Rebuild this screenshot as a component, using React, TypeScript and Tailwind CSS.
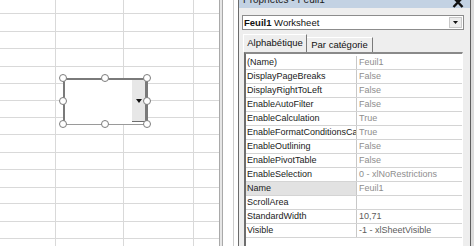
import React from "react";

const sheetRows = [
  "h-[14px]", "h-[18px]", "h-[17px]", "h-[18px]", "h-[17px]", "h-[17px]", "h-[17px]",
  "h-[17px]", "h-[18px]", "h-[17px]", "h-[18px]", "h-[16px]", "h-[18px]", "h-[17px]", "h-[8px]",
];

const props: { name: string; value: string; dark?: boolean; selected?: boolean }[] = [
  { name: "(Name)", value: "Feuil1" },
  { name: "DisplayPageBreaks", value: "False" },
  { name: "DisplayRightToLeft", value: "False" },
  { name: "EnableAutoFilter", value: "False" },
  { name: "EnableCalculation", value: "True" },
  { name: "EnableFormatConditionsCalculation", value: "True" },
  { name: "EnableOutlining", value: "False" },
  { name: "EnablePivotTable", value: "False" },
  { name: "EnableSelection", value: "0 - xlNoRestrictions" },
  { name: "Name", value: "Feuil1", selected: true },
  { name: "ScrollArea", value: "" },
  { name: "StandardWidth", value: "10,71", dark: true },
  { name: "Visible", value: "-1 - xlSheetVisible", dark: true },
];

function Handle({ pos }: { pos: string }) {
  return <span className={`absolute w-[8px] h-[8px] -ml-[4px] -mt-[4px] rounded-full border border-[#7d7d7d] bg-white ${pos}`} />;
}

function Sheet() {
  return (
    <div className="relative w-[219px] h-full overflow-hidden bg-white">
      {sheetRows.map((h, i) => (
        <div key={i} className={`flex border-b border-[#d9d9d9] ${h}`}>
          <div className="w-[56px] border-r border-[#d9d9d9]" />
          <div className="w-[68px] border-r border-[#d9d9d9]" />
          <div className="w-[70px] border-r border-[#d9d9d9]" />
          <div className="flex-1" />
        </div>
      ))}

      {/* combo box control in design mode */}
      <div className="absolute left-[63px] top-[78px] w-[85px] h-[47px]">
        <div className="flex h-full border-t-2 border-l-2 border-b border-t-[#7a7a7a] border-l-[#7a7a7a] border-b-[#9a9a9a] bg-white">
          <div className="flex-1" />
          <div className="flex w-[13px] h-[42px] items-center justify-center bg-[#e7e7e7] border-b border-[#6e6e6e]">
            <svg width="6" height="4" viewBox="0 0 6 4"><path d="M0 0h6L3 4z" fill="#111" /></svg>
          </div>
          <div className="w-[3px] bg-[#7a7a7a]" />
        </div>
        <Handle pos="left-[0px] top-[0px]" />
        <Handle pos="left-[42px] top-[0px]" />
        <Handle pos="left-[84px] top-[0px]" />
        <Handle pos="left-[0px] top-[23px]" />
        <Handle pos="left-[84px] top-[23px]" />
        <Handle pos="left-[0px] top-[46px]" />
        <Handle pos="left-[42px] top-[46px]" />
        <Handle pos="left-[84px] top-[46px]" />
      </div>
    </div>
  );
}

function Splitter() {
  return (
    <div className="flex w-[19px] h-full">
      <div className="w-[1px] bg-[#a9a9a9]" />
      <div className="w-[2px] bg-[#e6e6e6]" />
      <div className="w-[1px] bg-[#a9a9a9]" />
      <div className="w-[10px] bg-white" />
      <div className="w-[1px] bg-[#cdcdcd]" />
      <div className="w-[4px] bg-white" />
    </div>
  );
}

function PropertiesPanel() {
  return (
    <div className="flex h-full">
      <div className="flex flex-col w-[232px] h-full border-l border-[#6b6b6b] bg-[#eeeeee]">
        {/* title bar, cut at the top */}
        <div className="flex h-[8px] overflow-hidden bg-[#c3d2e3] pl-[4px] pr-[6px] justify-between">
          <span className="-mt-[6px] text-[10px] leading-[12px] text-[#1c1c1c]">Propriétés - Feuil1</span>
          <svg width="12" height="11" viewBox="0 0 12 11" className="-mt-[3px]">
            <path d="M1.5 0.5L10.5 10M10.5 0.5L1.5 10" stroke="#111" strokeWidth="2.4" />
          </svg>
        </div>

        <div className="flex flex-col flex-1 pt-[7px] pl-[3px]">
          {/* object combo */}
          <div className="flex items-center w-[222px] h-[15px] border border-[#8c8c8c] bg-white">
            <span className="flex-1 pl-[1px] text-[9.5px] leading-[13px] text-[#111] whitespace-nowrap">
              <b>Feuil1</b> Worksheet
            </span>
            <div className="flex w-[13px] h-[11px] mr-[1px] items-center justify-center bg-[#ececec] border border-[#c8c8c8]">
              <svg width="5" height="3" viewBox="0 0 5 3"><path d="M0 0h5L2.5 3z" fill="#111" /></svg>
            </div>
          </div>

          {/* tabs */}
          <div className="flex items-end h-[22px] pl-[1px]">
            <div className="flex h-[18px] w-[64px] items-center justify-center border-t border-l border-r border-t-white border-l-white border-r-[#7a7a7a] bg-[#eeeeee] text-[9.5px] text-[#111]">
              Alphabétique
            </div>
            <div className="flex h-[15px] w-[66px] items-center justify-center border-t border-r border-t-white border-r-[#7a7a7a] text-[9.5px] text-[#111]">
              Par catégorie
            </div>
          </div>

          {/* property grid */}
          <div className="flex-1 w-[219px] ml-[2px] border-t-2 border-l-2 border-t-[#8a8a8a] border-l-[#6e6e6e] border-r border-r-white pt-[2px] bg-white">
            {props.map((p) => (
              <div key={p.name} className="flex h-[14px] border-b border-[#d4d4d4] text-[9px] leading-[13px]">
                <div className={`w-[111px] pl-[1px] overflow-hidden whitespace-nowrap border-r border-[#c8c8c8] text-[#1a1a1a] ${p.selected ? "bg-[#e2e2e2]" : ""}`}>
                  {p.name}
                </div>
                <div className={`flex-1 pl-[2px] overflow-hidden whitespace-nowrap ${p.dark ? "text-[#5c5c5c]" : "text-[#8e8e8e]"}`}>
                  {p.value}
                </div>
              </div>
            ))}
          </div>
        </div>
      </div>
      <div className="w-[1px] h-full bg-[#5f5f5f]" />
      <div className="w-[3px] h-full bg-[#dcdcdc]" />
    </div>
  );
}

export default function App() {
  return (
    <div className="flex w-[474px] h-[246px] overflow-hidden bg-white" style={{ fontFamily: '"Liberation Sans", Arial, sans-serif' }}>
      <Sheet />
      <Splitter />
      <PropertiesPanel />
    </div>
  );
}
